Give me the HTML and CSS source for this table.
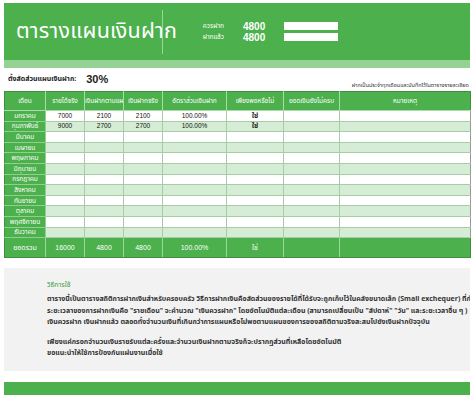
FILE: index.html
```html
<!DOCTYPE html>
<html lang="th">
<head>
<meta charset="utf-8">
<title>ตารางแผนเงินฝาก</title>
<link rel="stylesheet" href="styles.css">
</head>
<body>
<div class="page">
  <header class="banner">
    <div class="title-box"><h1 class="title">ตารางแผนเงินฝาก</h1></div>
    <div class="divider"></div>
    <div class="stats">
      <span class="stat-label">ควรฝาก</span><span class="stat-value">4800</span><span class="stat-box"></span>
      <span class="stat-label">ฝากแล้ว</span><span class="stat-value">4800</span><span class="stat-box"></span>
    </div>
  </header>
  <div class="band"></div>

  <div class="setting">
    <div class="setting-left">
      <span class="setting-label">ตั้งสัดส่วนแผนเงินฝาก:</span>
      <span class="setting-value">30%</span>
    </div>
    <span class="note">ฝากเป็นประจำทุกเดือนและบันทึกไว้ในตารางรายละเอียด</span>
  </div>

  <table class="grid">
    <colgroup>
      <col class="c1"><col class="c2"><col class="c3"><col class="c4"><col class="c5"><col class="c6"><col class="c7"><col class="c8">
    </colgroup>
    <thead>
      <tr class="head">
        <th>เดือน</th><th>รายได้จริง</th><th>เงินฝากตามแผน</th><th>เงินฝากจริง</th><th>อัตราส่วนเงินฝาก</th><th>เพียงพอหรือไม่</th><th>ยอดเงินยังไม่ครบ</th><th>หมายเหตุ</th>
      </tr>
    </thead>
    <tbody>
      <tr class="odd"><th>มกราคม</th><td>7000</td><td>2100</td><td>2100</td><td>100.00%</td><td class="thai">ใช่</td><td></td><td></td></tr>
      <tr class="even"><th>กุมภาพันธ์</th><td>9000</td><td>2700</td><td>2700</td><td>100.00%</td><td class="thai">ใช่</td><td></td><td></td></tr>
      <tr class="odd"><th>มีนาคม</th><td></td><td></td><td></td><td></td><td></td><td></td><td></td></tr>
      <tr class="even"><th>เมษายน</th><td></td><td></td><td></td><td></td><td></td><td></td><td></td></tr>
      <tr class="odd"><th>พฤษภาคม</th><td></td><td></td><td></td><td></td><td></td><td></td><td></td></tr>
      <tr class="even"><th>มิถุนายน</th><td></td><td></td><td></td><td></td><td></td><td></td><td></td></tr>
      <tr class="odd"><th>กรกฎาคม</th><td></td><td></td><td></td><td></td><td></td><td></td><td></td></tr>
      <tr class="even"><th>สิงหาคม</th><td></td><td></td><td></td><td></td><td></td><td></td><td></td></tr>
      <tr class="odd"><th>กันยายน</th><td></td><td></td><td></td><td></td><td></td><td></td><td></td></tr>
      <tr class="even"><th>ตุลาคม</th><td></td><td></td><td></td><td></td><td></td><td></td><td></td></tr>
      <tr class="odd"><th>พฤศจิกายน</th><td></td><td></td><td></td><td></td><td></td><td></td><td></td></tr>
      <tr class="even"><th>ธันวาคม</th><td></td><td></td><td></td><td></td><td></td><td></td><td></td></tr>
    </tbody>
    <tfoot>
      <tr class="total"><th>ยอดรวม</th><td>16000</td><td>4800</td><td>4800</td><td>100.00%</td><td class="thai">ใช่</td><td></td><td></td></tr>
    </tfoot>
  </table>

  <section class="howto">
    <h2 class="howto-title">วิธีการใช้</h2>
    <p class="line">ตารางนี้เป็นตารางสถิติการฝากเงินสำหรับครอบครัว วิธีการฝากเงินคือสัดส่วนของรายได้ที่ได้รับจะถูกเก็บไว้ในคลังขนาดเล็ก (Small exchequer) ที่กำหนด</p>
    <p class="line">ระยะเวลาของการฝากเงินคือ "รายเดือน" จะคำนวณ "เงินควรฝาก" โดยอัตโนมัติแต่ละเดือน (สามารถเปลี่ยนเป็น "สัปดาห์" "วัน" และระยะเวลาอื่น ๆ )</p>
    <p class="line">เงินควรฝาก เงินฝากแล้ว ตลอดทั้งจำนวนเงินที่เกินกว่าการแผนหรือไม่พอตามแผนของการของสถิติตามจริงสะสมไปยังเงินฝากปัจจุบัน</p>
    <p class="line gap">เพียงแค่กรอกจำนวนเงินรายรับแต่ละครั้งและจำนวนเงินฝากตามจริงก็จะปรากฏส่วนที่เหลือโดยอัตโนมัติ</p>
    <p class="line">ขอแนะนำให้ใช้การป้องกันแผ่นงานเมื่อใช้</p>
  </section>

  <footer class="bottom-bar"></footer>
</div>
</body>
</html>
```
FILE: styles.css
```css
html, body {
  margin: 0;
  padding: 0;
  background: #ffffff;
}
body {
  font-family: "Noto Sans Thai", "Tahoma", "Leelawadee UI", "Liberation Sans", "DejaVu Sans", sans-serif;
  color: #222;
  overflow: hidden;
}
.page {
  padding: 3px 4px 0;
  width: 466px;
}
.banner {
  height: 57px;
  background: #4cb04c;
  display: flex;
  align-items: stretch;
}
.title-box {
  width: 158px;
  display: flex;
  align-items: center;
  padding-left: 12px;
  box-sizing: border-box;
}
.title {
  margin: 0;
  color: #fff;
  font-size: 21.5px;
  font-weight: normal;
  white-space: nowrap;
  letter-spacing: 0.2px;
}
.divider {
  width: 1px;
  background: #9ad59a;
  margin: 7px 0 6px;
}
.stats {
  display: grid;
  grid-template-columns: 62px 59px 54px;
  grid-auto-rows: 10px;
  row-gap: 1px;
  align-content: center;
  align-items: center;
}
.stat-label {
  color: #fff;
  font-size: 6.5px;
  text-align: right;
  padding-right: 1px;
}
.stat-value {
  color: #fff;
  font-family: "Liberation Sans", Arial, sans-serif;
  font-weight: bold;
  font-size: 10px;
  padding-left: 18px;
}
.stat-box {
  background: #fff;
  height: 8px;
}
.band {
  height: 8px;
  background: #93d293;
}
.setting {
  height: 23px;
  display: flex;
  justify-content: space-between;
  align-items: flex-end;
}
.setting-left {
  display: flex;
  align-items: center;
  gap: 10px;
  padding-left: 4px;
  padding-bottom: 6px;
}
.setting-label {
  font-size: 7px;
  font-weight: bold;
  color: #222;
}
.setting-value {
  font-family: "Liberation Sans", Arial, sans-serif;
  font-size: 11px;
  font-weight: bold;
  color: #222;
}
.note {
  font-size: 5.5px;
  color: #333;
  padding-bottom: 2px;
  padding-right: 1px;
}
.grid {
  width: 466px;
  border-collapse: collapse;
  table-layout: fixed;
  font-size: 6.5px;
}
.c1 { width: 41px; }
.c2 { width: 39px; }
.c3 { width: 39px; }
.c4 { width: 39px; }
.c5 { width: 64px; }
.c6 { width: 57px; }
.c7 { width: 56px; }
.c8 { width: 131px; }
.grid th, .grid td {
  padding: 0;
  text-align: center;
  white-space: nowrap;
  overflow: hidden;
  font-weight: normal;
  line-height: 8px;
}
.grid td {
  border: 1px solid #a9cba9;
  color: #111;
  font-family: "Liberation Sans", "DejaVu Sans", sans-serif;
}
.grid td.thai {
  font-family: "Noto Sans Thai", "Tahoma", "Leelawadee UI", "Liberation Sans", "DejaVu Sans", sans-serif;
  font-size: 7px;
  font-weight: bold;
  color: #222;
}
.head th {
  height: 18px;
  background: #4cb04c;
  color: #fff;
  border: 1px solid #a6dca6;
  border-top-color: #3f8f3f;
}
.head th:first-child { border-left-color: #3f8f3f; }
.head th:last-child { border-right-color: #3f8f3f; }
tbody th {
  background: #4cb04c;
  color: #fff;
  border: 1px solid #8fcf8f;
  border-left-color: #3f8f3f;
  height: 9.6px;
}
tbody tr.odd td { background: #ffffff; }
tbody tr.even td { background: #d4edd4; }
tbody td:last-child { border-right-color: #999; }
.total th, .total td {
  height: 19px;
  background: #4cb04c;
  color: #fff;
  border: 1px solid #9bd69b;
  border-bottom-color: #3f8f3f;
  font-size: 7px;
}
.total td { font-family: "Liberation Sans", "DejaVu Sans", sans-serif; }
.grid .total td.thai { color: #fff; font-weight: normal; }
.total th { border-left-color: #3f8f3f; }
.total td:last-child { border-right-color: #3f8f3f; }
.howto {
  margin-top: 10px;
  height: 103px;
  background: #f2f2f2;
  padding: 12px 0 0 43px;
  box-sizing: border-box;
  overflow: hidden;
}
.howto-title {
  margin: 0 0 4px;
  font-size: 7px;
  font-weight: normal;
  color: #3a9a3a;
  line-height: 10px;
}
.line {
  margin: 0;
  font-size: 7px;
  font-weight: bold;
  line-height: 11.5px;
  color: #333;
  white-space: nowrap;
}
.line.gap {
  margin-top: 8px;
}
.bottom-bar {
  margin-top: 11px;
  height: 20px;
  background: #4cb04c;
}
```
